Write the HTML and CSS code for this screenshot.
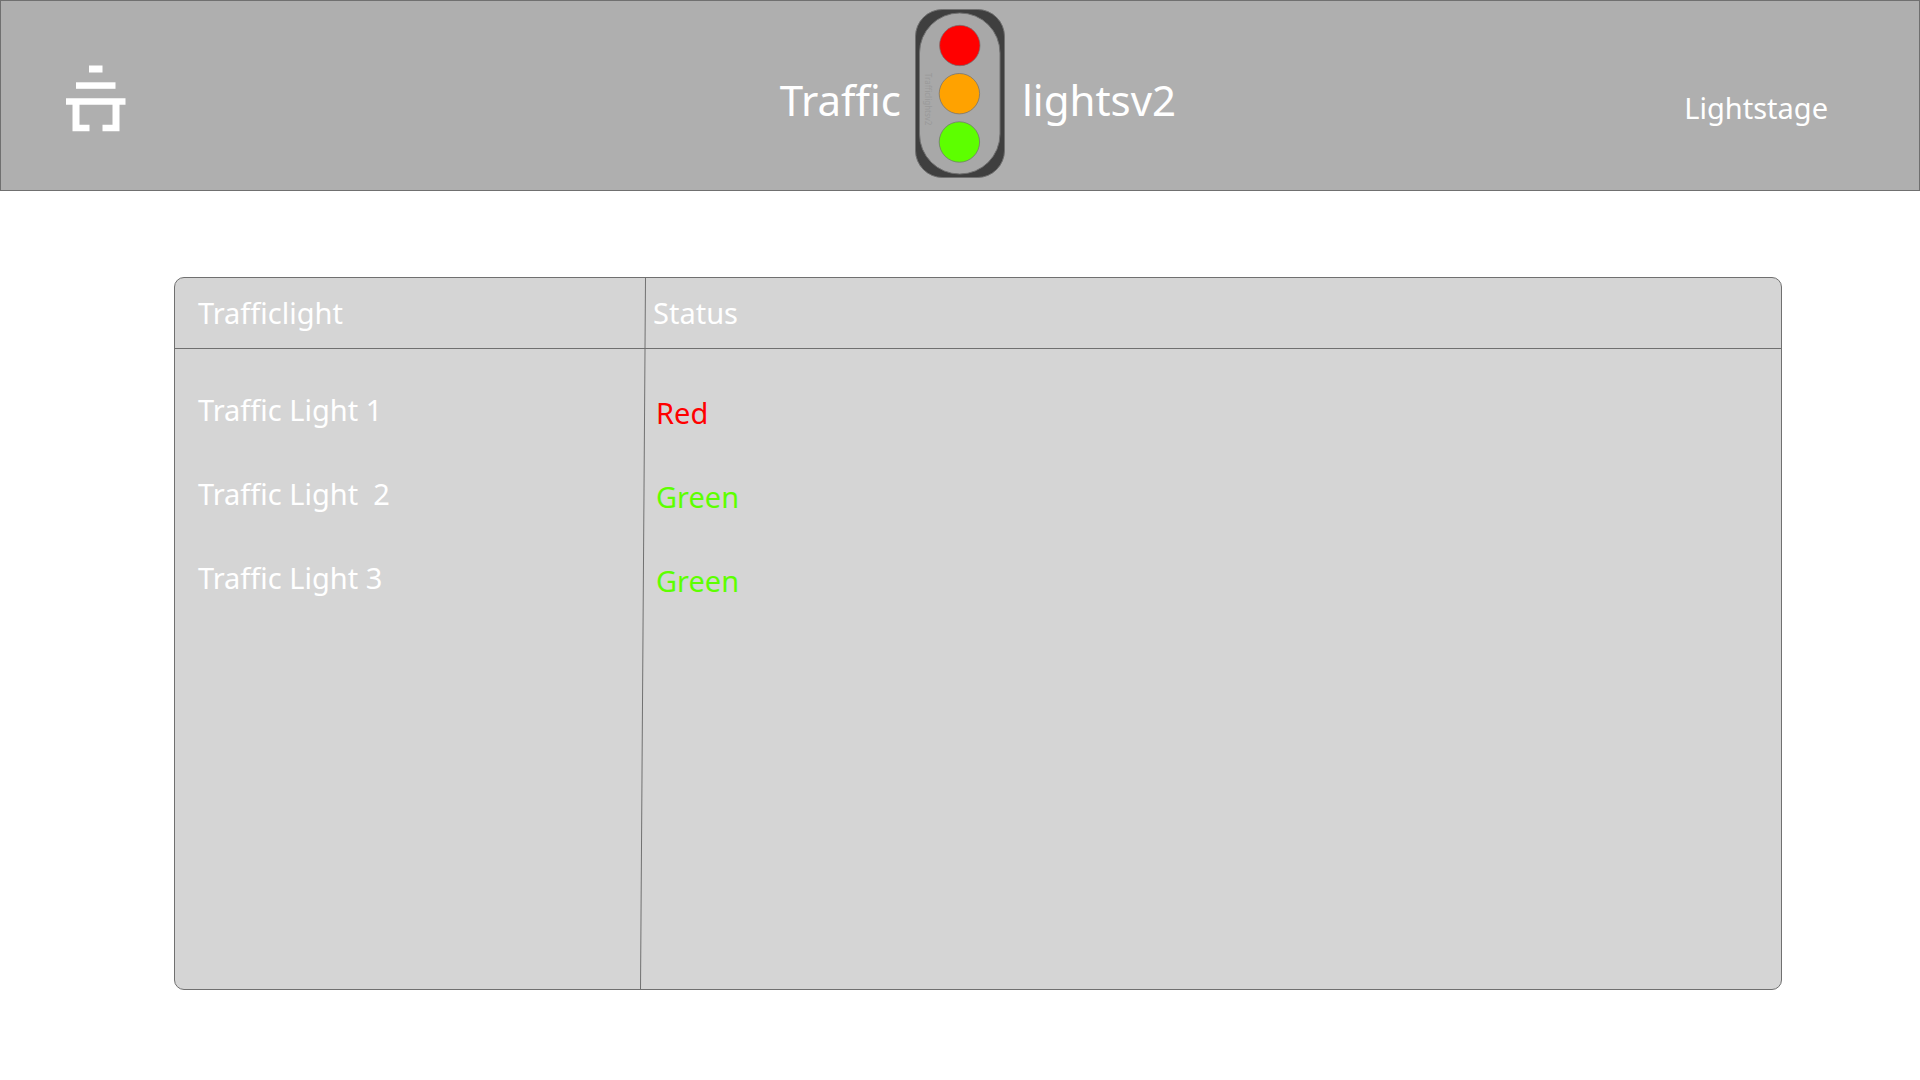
FILE: index.html
```html
<!DOCTYPE html>
<html lang="en">
<head>
<meta charset="UTF-8" />
<meta name="viewport" content="width=device-width, initial-scale=1" />
<title>Trafficlightsv2</title>
<link rel="stylesheet" href="styles.css">
</head>
<body>

<header class="header">
  <div class="header-left">
    <a href="#" class="home" aria-label="Home">
      <svg width="60" height="67" viewBox="0 0 60 67" fill="#fff">
        <rect x="23" y="0.5" width="13.5" height="7" />
        <rect x="10" y="17.3" width="39.5" height="6.5" />
        <path d="M0 33.3h59.5v6.5h-6v26.5h-17v-6.500h10v-20h-33v20h10v6.500h-17v-26.500h-6.500z" />
      </svg>
    </a>
    <span class="title">Traffic</span>
  </div>

  <svg class="logo" width="90" height="169" viewBox="0 0 90 169">
    <rect x="0.5" y="0.5" width="89" height="168" rx="27" fill="#3f3f3f" stroke="#707070" />
    <rect x="4.5" y="4" width="80.5" height="161" rx="40" fill="#a8a8a8" stroke="#707070" />
    <g stroke="#707070" stroke-width="0.7">
      <circle cx="44.8" cy="36.5" r="20.2" fill="#ff0000" />
      <circle cx="44.4" cy="84.7" r="20.2" fill="#ffa200" />
      <circle cx="44.4" cy="133" r="20.2" fill="#5dff00" />
    </g>
    <text class="logo-text" transform="translate(10 64) rotate(90)">Trafficlightsv2</text>
  </svg>

  <div class="header-right">
    <span class="title">lightsv2</span>
    <a href="#" class="nav-link">Lightstage</a>
  </div>
</header>

<main class="panel">
  <svg class="divider" width="6" height="100%" viewBox="0 0 6 713" preserveAspectRatio="none">
    <line x1="5.5" y1="0" x2="0.5" y2="713" stroke="#707070" />
  </svg>
  <table class="lights">
    <thead>
      <tr>
        <th class="name">Trafficlight</th>
        <th class="status">Status</th>
      </tr>
    </thead>
    <tbody>
      <tr>
        <td>Traffic Light 1</td>
        <td class="red">Red</td>
      </tr>
      <tr>
        <td>Traffic Light&nbsp; 2</td>
        <td class="green">Green</td>
      </tr>
      <tr>
        <td>Traffic Light 3</td>
        <td class="green">Green</td>
      </tr>
    </tbody>
  </table>
</main>

</body>
</html>
```

FILE: styles.css
```css
* {
  box-sizing: border-box;
}
body {
  margin: 0;
  background: #fff;
  color: #fff;
  font-family: 'Segoe UI', 'Noto Sans', 'Open Sans', sans-serif;
  font-size: 29px;
  line-height: 40px;
}
.header {
  display: grid;
  grid-template-columns: 1fr 90px 1fr;
  align-items: start;
  padding: 8px 0 12px;
  background: #afafaf;
  border: 1px solid #707070;
}
.header-left,
.header-right {
  display: flex;
  justify-content: space-between;
  align-items: flex-start;
}
.header-left {
  padding: 0 14px 0 65px;
}
.header-right {
  padding: 0 91px 0 17px;
}
.home {
  margin-top: 56px;
  line-height: 0;
}
.title {
  margin-top: 61px;
  font-size: 42px;
  line-height: 60px;
}
.nav-link {
  margin-top: 79px;
  color: #fff;
  text-decoration: none;
}
.logo-text {
  fill: #999;
  font-size: 8px;
}
.panel {
  position: relative;
  min-height: 713px;
  margin: 86px 138px 0 174px;
  background: #d5d5d5;
  border: 1px solid #707070;
  border-radius: 10px;
}
/* slightly slanted line between the two columns */
.divider {
  position: absolute;
  top: 0;
  left: 465px;
}
.lights {
  width: 100%;
  border-collapse: separate;
  border-spacing: 0;
}
th {
  height: 71px;
  padding: 0 0 0 23px;
  border-bottom: 1px solid #707070;
  font-weight: normal;
  text-align: left;
}
.name {
  width: 471px;
}
.status {
  padding-left: 7px;
}
td {
  padding: 41px 0 3px 23px;
  vertical-align: top;
}
.red,
.green {
  padding: 44px 0 0 10px;
}
.red {
  color: #ff0000;
}
.green {
  color: #5dff00;
}
```
